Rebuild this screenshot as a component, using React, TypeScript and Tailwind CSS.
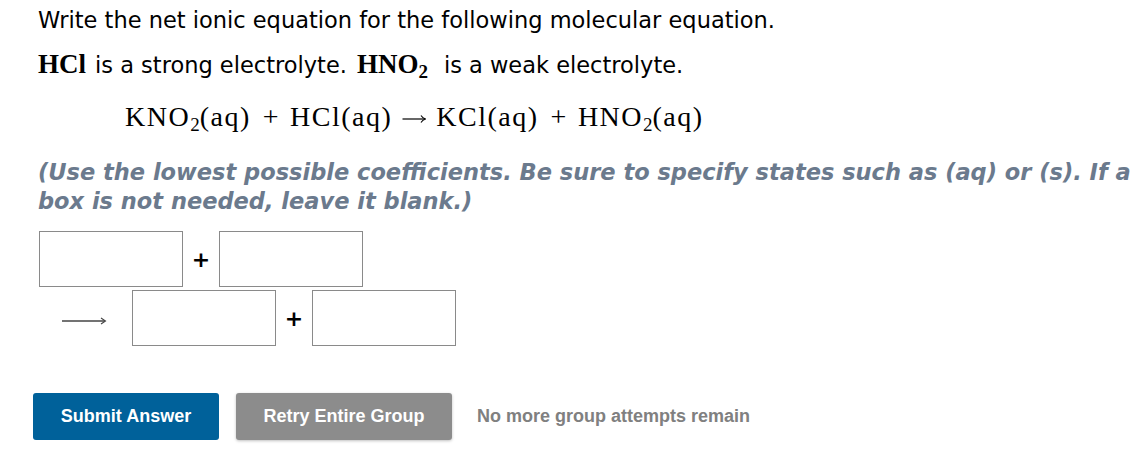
import React from "react";

const sans = { fontFamily: '"DejaVu Sans", Verdana, sans-serif' };
const serif = { fontFamily: '"Liberation Serif", "DejaVu Serif", serif' };
const arial = { fontFamily: '"Liberation Sans", Arial, sans-serif' };

function Box() {
  return <div className="w-[144px] h-[56px] border border-[#8a8a8a] bg-white" />;
}

function Plus() {
  return (
    <div className="w-[36px] flex items-center justify-center text-[22px] font-bold text-black" style={sans}>
      +
    </div>
  );
}

function Sub() {
  return <sub className="text-[19px] align-baseline relative top-[5px] tracking-normal">2</sub>;
}

export default function App() {
  return (
    <div className="w-[1136px] h-[452px] bg-white overflow-hidden text-[#1a1a1a]">
      <div className="pl-[38px] pt-[5px]">
        <div className="text-[22.5px] leading-[30px] whitespace-nowrap text-black" style={sans}>
          Write the net ionic equation for the following molecular equation.
        </div>
        <div className="mt-[14px] text-[22.5px] leading-[30px] whitespace-nowrap text-black flex items-baseline" style={sans}>
          <span className="font-bold text-[27px]" style={serif}>HCl</span>
          <span className="ml-[9px]">is a strong electrolyte.</span>
          <span className="ml-[10px] font-bold text-[27px]" style={serif}>
            HNO<Sub />
          </span>
          <span className="ml-[16px]">is a weak electrolyte.</span>
        </div>
        <div
          className="mt-[20px] pl-[87px] text-[28px] leading-[33px] whitespace-nowrap text-black flex items-baseline tracking-[1.5px]"
          style={serif}
        >
          <span>
            KNO<Sub />(aq)
          </span>
          <span className="ml-[12px] mr-[10px]">+</span>
          <span>HCl(aq)</span>
          <span className="ml-[10px] mr-[10px] tracking-normal">
            <svg width="24" height="12" viewBox="0 0 24 12" className="relative top-[-1px]">
              <line x1="0.5" y1="6" x2="23" y2="6" stroke="#000" strokeWidth="1.2" />
              <path d="M19 2.5 Q20.5 5 23.5 6 Q20.5 7 19 9.5" fill="none" stroke="#000" strokeWidth="1.1" />
            </svg>
          </span>
          <span>KCl(aq)</span>
          <span className="ml-[12px] mr-[10px]">+</span>
          <span>
            HNO<Sub />(aq)
          </span>
        </div>
        <div
          className="mt-[25px] text-[22.5px] leading-[29px] font-bold italic text-[#6b7a8d] whitespace-nowrap"
          style={sans}
        >
          (Use the lowest possible coefficients. Be sure to specify states such as (aq) or (s). If a
          <br />
          box is not needed, leave it blank.)
        </div>
        <div className="mt-[15px] ml-[1px] flex flex-col gap-[3px]">
          <div className="flex">
            <Box />
            <Plus />
            <Box />
          </div>
          <div className="flex">
            <div className="w-[93px] flex items-center pl-[23px] pt-[6px]">
              <svg width="45" height="10" viewBox="0 0 45 10">
                <line x1="0" y1="5" x2="43" y2="5" stroke="#444" strokeWidth="1.3" />
                <path d="M39 2 L43.5 5 L39 8" fill="none" stroke="#444" strokeWidth="1.1" />
              </svg>
            </div>
            <Box />
            <Plus />
            <Box />
          </div>
        </div>
      </div>
      <div className="mt-[47px] pl-[33px] flex items-center" style={arial}>
        <div className="w-[186px] h-[47px] rounded-[3px] bg-[#00619a] text-white font-bold text-[18px] flex items-center justify-center">
          Submit Answer
        </div>
        <div className="ml-[17px] w-[216px] h-[47px] rounded-[3px] bg-[#8c8c8c] text-white font-bold text-[18px] flex items-center justify-center shadow-[0_1px_3px_rgba(0,0,0,0.25)]">
          Retry Entire Group
        </div>
        <div className="ml-[25px] text-[18px] font-bold text-[#808080]">No more group attempts remain</div>
      </div>
    </div>
  );
}
